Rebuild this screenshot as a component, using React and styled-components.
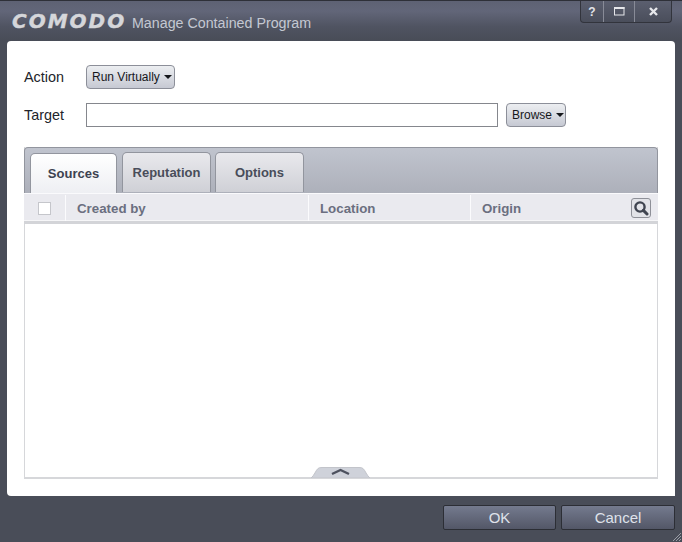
import React from 'react';
import styled, { createGlobalStyle } from 'styled-components';

const Global = createGlobalStyle`
  html, body { margin: 0; padding: 0; background: #494d58; }
  body { font-family: "Liberation Sans", Arial, sans-serif; }
`;

const Window = styled.div`
  width: 682px; height: 542px; box-sizing: border-box; overflow: hidden;
  display: flex; flex-direction: column; position: relative;
  background: #494d58;
  border-top: 1px solid #2e3038;
`;
const TitleBar = styled.div`
  height: 40px; flex: none; box-sizing: border-box;
  display: flex; align-items: flex-start; justify-content: space-between;
  padding: 0 10px 0 12px;
  background: linear-gradient(#5e6274 0%, #626679 25%, #4f5361 65%, #484c57 100%);
`;
const Brand = styled.div`display: flex; align-items: baseline; padding-top: 8px;`;
const Logo = styled.span`
  font-family: "DejaVu Sans", sans-serif; font-weight: 700; font-style: italic;
  font-size: 20px; letter-spacing: 2px; color: #d5d6da; line-height: 24px; width: 120px;
  -webkit-text-stroke: 0.4px #d5d6da;
`;
const Title = styled.span`font-size: 14.25px; color: #c4c8d2; line-height: 24px;`;
const Controls = styled.div`
  display: flex; height: 22px; box-sizing: border-box;
  border: 1px solid #32343c; border-top: 0; border-radius: 0 0 4px 4px;
  background: linear-gradient(#5b5f6f, #4a4e5b);
`;
const Control = styled.div`
  width: ${p => p.$w}px; display: flex; align-items: center; justify-content: center;
  box-sizing: border-box; color: #e2e3e8; font-weight: 700; font-size: 12px;
  & + & { border-left: 1px solid #888b97; }
`;
const Content = styled.div`
  flex: 1; margin: 0 7px; background: #fff; border-radius: 4px 4px 0 4px;
  padding: 24px 17px 17px; display: flex; flex-direction: column;
  min-height: 0; box-sizing: border-box;
`;
const Row = styled.div`
  display: flex; align-items: center; height: 24px; margin-bottom: ${p => p.$mb}px;
`;
const Label = styled.span`width: 62px; font-size: 14.4px; color: #22242a;`;
const DropButton = styled.div`
  display: flex; align-items: center; height: 24px; box-sizing: border-box;
  width: ${p => p.$w}px; margin-left: ${p => p.$ml || 0}px; padding-left: 5px;
  border: 1px solid #8c8f99; border-radius: 4px;
  background: linear-gradient(#eceef1, #c6c9d3);
  font-size: 12px; color: #15171b; white-space: nowrap;
`;
const Caret = styled.i`
  margin-left: 4px; width: 0; height: 0;
  border-left: 4px solid transparent; border-right: 4px solid transparent;
  border-top: 4px solid #15171b;
`;
const TargetInput = styled.div`
  width: 412px; height: 24px; box-sizing: border-box; border: 1px solid #85878d; background: #fff;
`;
const Panel = styled.div`
  flex: 1; min-height: 0; display: flex; flex-direction: column; position: relative;
  border: 1px solid #d6d7da; border-top: 0; border-bottom-width: 2px;
`;
const TabStrip = styled.div`
  height: 46px; flex: none; box-sizing: border-box; margin: 0 -1px;
  display: flex; align-items: flex-end; gap: 5px; padding: 0 0 0 5px;
  border: 1px solid #92959e; border-bottom: 0; border-radius: 4px 4px 0 0;
  background: linear-gradient(#c0c4ce, #adb0ba);
`;
const Tab = styled.div`
  box-sizing: border-box; width: ${p => p.$w}px; height: 40px;
  margin-bottom: ${p => p.$active ? 0 : 1}px; margin-right: ${p => p.$active ? 0 : -1}px;
  display: flex; align-items: center; justify-content: center;
  font-size: 13px; font-weight: 700; color: ${p => p.$active ? '#3d4250' : '#494d5a'};
  border: 1px solid #92959e; border-bottom: 0; border-radius: 5px 5px 0 0;
  background: ${p => p.$active ? 'linear-gradient(#ffffff 0%, #eeeff3 100%)' : 'linear-gradient(#e9e9ed, #cfd0d6)'};
`;
const Header = styled.div`
  height: 31px; flex: none; box-sizing: border-box; margin: 0 -1px; padding-top: 1px;
  display: flex; position: relative; background: #eaeaef;
  border-top: 1px solid #fafafc; border-bottom: 3px solid #d3d4d8;
  box-shadow: inset 0 -1px 0 #f6f6f8;
`;
const Cell = styled.div`
  box-sizing: border-box; width: ${p => p.$w}px; padding-left: ${p => p.$pl ?? 11}px;
  display: flex; align-items: center;
  font-size: 13.3px; font-weight: 700; color: #6b6f80;
  border-right: ${p => p.$last ? 0 : '1px solid #fbfbfd'};
  justify-content: ${p => p.$center ? 'center' : 'flex-start'};
`;
const Check = styled.div`
  width: 13px; height: 13px; background: #fff; border: 1px solid #c5c6cb; box-sizing: border-box;
`;
const SearchBtn = styled.div`
  position: absolute; right: 7px; top: 4px; width: 20px; height: 20px; box-sizing: border-box;
  border: 1px solid #8e9098; border-radius: 3px; background: #e2e3e8;
  display: flex; align-items: center; justify-content: center;
`;
const Body = styled.div`flex: 1; background: #fff;`;
const Handle = styled.svg`
  position: absolute; left: 286px; bottom: -1px; display: block;
`;
const Footer = styled.div`
  height: 46px; flex: none; box-sizing: border-box; position: relative;
  display: flex; justify-content: flex-end; gap: 5px; padding: 9px 7px 0 0;
`;
const FootBtn = styled.div`
  width: ${p => p.$w}px; height: 25px; box-sizing: border-box;
  display: flex; align-items: center; justify-content: center;
  border: 1px solid #2c2e35; border-radius: 2px;
  background: linear-gradient(#747a8e, #535767);
  color: #dfe2ea; font-size: 15px;
`;
const Grip = styled.svg`position: absolute; right: 0; bottom: 0;`;

export default function App() {
  return (
    <Window>
      <Global />
      <TitleBar>
        <Brand>
          <Logo>COMODO</Logo>
          <Title>Manage Contained Program</Title>
        </Brand>
        <Controls>
          <Control $w={22}>?</Control>
          <Control $w={31}>
            <svg width="11" height="9" viewBox="0 0 11 9"><rect x="0.5" y="0.5" width="9.5" height="7.5" fill="none" stroke="#e6e7eb" /><rect x="0" y="0" width="10.5" height="2" fill="#e6e7eb" /></svg>
          </Control>
          <Control $w={37}>
            <svg width="9" height="9" viewBox="0 0 9 9"><path d="M1 1 L8 8 M8 1 L1 8" stroke="#e6e7eb" strokeWidth="2.4" /></svg>
          </Control>
        </Controls>
      </TitleBar>
      <Content>
        <Row $mb={14}>
          <Label>Action</Label>
          <DropButton $w={89}>Run Virtually<Caret /></DropButton>
        </Row>
        <Row $mb={20}>
          <Label>Target</Label>
          <TargetInput />
          <DropButton $w={60} $ml={8}>Browse<Caret /></DropButton>
        </Row>
        <Panel>
          <TabStrip>
            <Tab $w={87} $active>Sources</Tab>
            <Tab $w={89}>Reputation</Tab>
            <Tab $w={89}>Options</Tab>
          </TabStrip>
          <Header>
            <Cell $w={42} $pl={0} $center><Check /></Cell>
            <Cell $w={243}>Created by</Cell>
            <Cell $w={162}>Location</Cell>
            <Cell $w={187} $last>Origin</Cell>
            <SearchBtn>
              <svg width="16" height="16" viewBox="0 0 16 16"><circle cx="7" cy="7" r="4.6" fill="none" stroke="#3f4450" strokeWidth="2.4" /><path d="M10.4 10.4 L14 14" stroke="#3f4450" strokeWidth="3" strokeLinecap="round" /></svg>
            </SearchBtn>
          </Header>
          <Body />
          <Handle width="60" height="11" viewBox="0 0 60 11">
            <path d="M0 11 C3 9 5 3 7 1.5 Q8 .5 11 .5 L48 .5 Q51 .5 52 1.5 C54 3 56 9 59 11 Z" fill="#cfd2da" stroke="#c2c4ca" />
            <path d="M21 7 L29.5 3 L38 7" fill="none" stroke="#4d515e" strokeWidth="2.4" />
          </Handle>
        </Panel>
      </Content>
      <Footer>
        <FootBtn $w={113}>OK</FootBtn>
        <FootBtn $w={114}>Cancel</FootBtn>
        <Grip width="10" height="10" viewBox="0 0 10 10">
          <path d="M1 9 L9 1 M4 9 L9 4 M7 9 L9 7" stroke="#9a9da6" strokeWidth="1" />
        </Grip>
      </Footer>
    </Window>
  );
}
